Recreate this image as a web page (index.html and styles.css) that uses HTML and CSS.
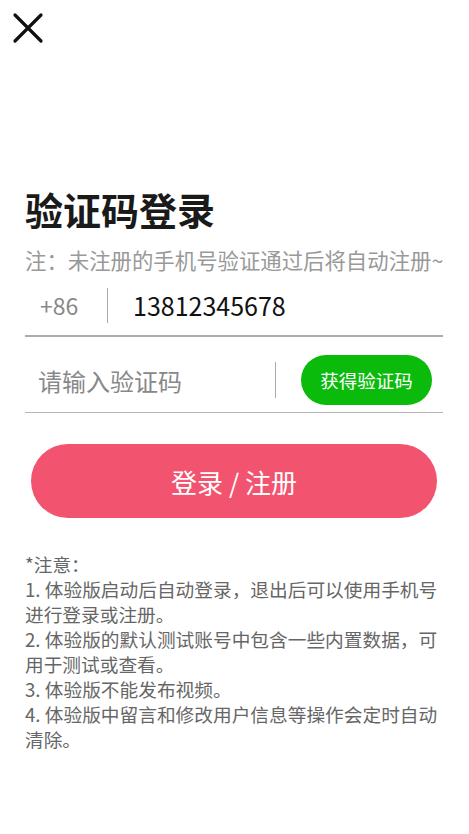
FILE: index.html
```html
<!DOCTYPE html>
<html lang="zh-CN">
<head>
    <meta charset="UTF-8">
    <meta name="viewport" content="width=device-width, initial-scale=1.0">
    <title>验证码登录</title>
    <link rel="stylesheet" href="styles.css">
</head>
<body>
    <div class="topbar">
        <button class="close" aria-label="关闭">
            <svg width="32" height="32" viewBox="0 0 32 32">
                <path d="M3 3 L29 29 M29 3 L3 29" stroke="#111" stroke-width="3.2" stroke-linecap="round" fill="none"/>
            </svg>
        </button>
    </div>
    <div class="login">
        <h1 class="title">验证码登录</h1>
        <p class="tip">注：未注册的手机号验证通过后将自动注册~</p>

        <div class="field phone">
            <span class="prefix">+86</span>
            <span class="sep"></span>
            <input class="input" type="tel" value="13812345678">
        </div>

        <div class="field code">
            <input class="input" type="text" placeholder="请输入验证码">
            <span class="sep"></span>
            <button class="send">获得验证码</button>
        </div>

        <button class="submit">登录 / 注册</button>

        <div class="notice">
            <p>*注意：</p>
            <p>1. 体验版启动后自动登录，退出后可以使用手机号进行登录或注册。</p>
            <p>2. 体验版的默认测试账号中包含一些内置数据，可用于测试或查看。</p>
            <p>3. 体验版不能发布视频。</p>
            <p>4. 体验版中留言和修改用户信息等操作会定时自动清除。</p>
        </div>
    </div>
</body>
</html>
```

FILE: styles.css
```css
body {
    margin: 0;
    background: #fff;
    font-family: "Noto Sans CJK SC", "Noto Sans", sans-serif;
    color: #111;
}
.topbar {
    height: 175px;
    padding: 12px 0 0 12px;
}
.close {
    padding: 0;
    width: 32px;
    height: 32px;
    border: none;
    background: none;
    display: block;
}
.login {
    padding: 0 26px 0 25px;
}
.title {
    margin: 0;
    font-size: 38px;
    line-height: 44px;
    font-weight: 700;
    color: #1a1a1a;
}
.tip {
    margin: 14px 0 0;
    font-size: 21.4px;
    line-height: 30px;
    color: #999;
    white-space: nowrap;
}
.field {
    display: flex;
    align-items: center;
}
.sep {
    width: 1px;
    background: #aaa;
    flex: none;
}
.input {
    flex: 1;
    min-width: 0;
    border: none;
    outline: none;
    background: none;
    font-family: inherit;
    padding: 0;
}
.phone {
    margin-top: 12px;
    height: 36px;
    padding-bottom: 12px;
    border-bottom: 2px solid #acacac;
}
.phone .prefix {
    width: 82px;
    padding-left: 15px;
    box-sizing: border-box;
    font-size: 23px;
    color: #888;
}
.phone .sep {
    height: 35px;
}
.phone .input {
    margin-left: 25px;
    font-size: 25px;
    color: #111;
}
.code {
    margin-top: 18px;
    height: 50px;
    padding-bottom: 7px;
    border-bottom: 1px solid #b4b4b4;
}
.code .input {
    padding-left: 13px;
    font-size: 24px;
}
.code .input::placeholder {
    color: #888;
}
.code .sep {
    height: 36px;
}
.send {
    margin: 0 11px 0 25px;
    width: 131px;
    height: 50px;
    border: none;
    border-radius: 25px;
    background: #0bbb0b;
    color: #fff;
    font-family: inherit;
    font-size: 18.5px;
    padding: 0;
}
.submit {
    display: block;
    margin: 31px 6px 0;
    width: calc(100% - 12px);
    height: 74px;
    border: none;
    border-radius: 37px;
    background: #f25470;
    color: #fff;
    font-family: inherit;
    font-size: 26px;
}
.notice {
    margin-top: 33px;
    font-size: 18.7px;
    line-height: 25px;
    color: #666;
}
.notice p {
    margin: 0;
}
```
